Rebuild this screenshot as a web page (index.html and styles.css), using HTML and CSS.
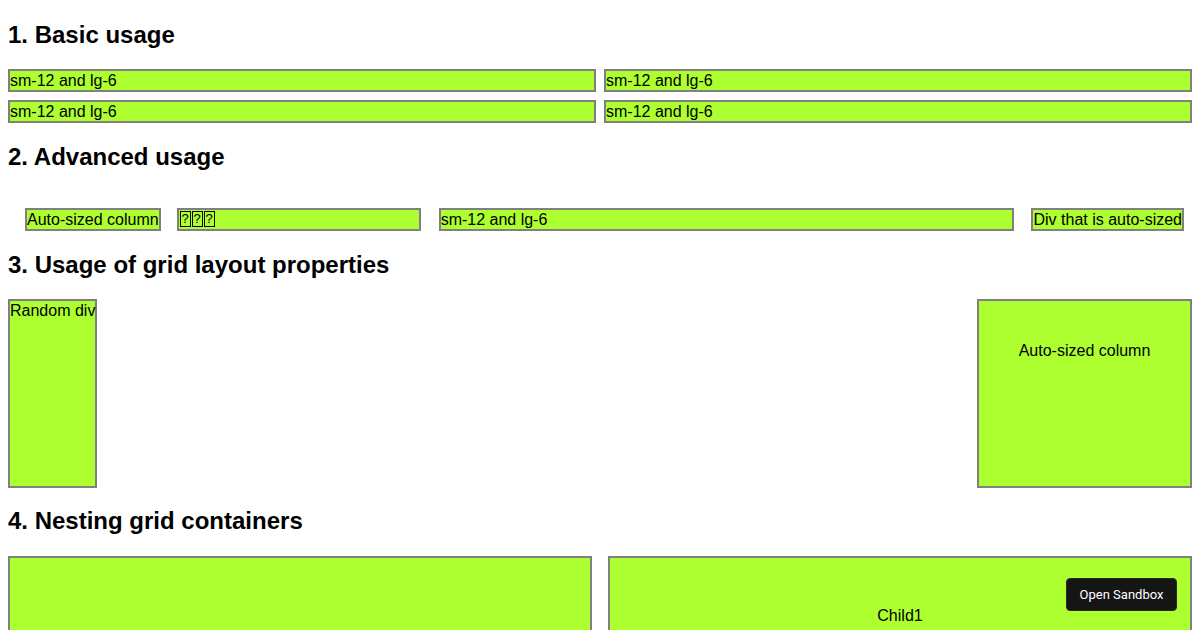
FILE: index.html
```html
<!DOCTYPE html>
<html>
<head>
<meta charset="utf-8">
<link rel="stylesheet" href="styles.css">
</head>
<body>
<h2>1. Basic usage</h2>
<div class="grid-basic">
  <div class="box">sm-12 and lg-6</div>
  <div class="box">sm-12 and lg-6</div>
  <div class="box">sm-12 and lg-6</div>
  <div class="box">sm-12 and lg-6</div>
</div>
<h2>2. Advanced usage</h2>
<div class="row-adv">
  <div class="box first">Auto-sized column</div>
  <div class="box fixed"><span class="tofu">?</span><span class="tofu">?</span><span class="tofu">?</span></div>
  <div class="box grow">sm-12 and lg-6</div>
  <div class="box last">Div that is auto-sized</div>
</div>
<h2>3. Usage of grid layout properties</h2>
<div class="row-props">
  <div class="box tall">Random div</div>
  <div class="box tall wide">Auto-sized column</div>
</div>
<h2>4. Nesting grid containers</h2>
<div class="row-nest">
  <div class="box nest"></div>
  <div class="box nest child">Child1</div>
</div>
<button class="sandbox">Open Sandbox</button>
</body>
</html>
```

FILE: styles.css
```css
html {
  overflow: hidden;
}
body {
  margin: 0 8px 8px;
  padding-top: 1px;
  font-family: "Liberation Sans", Arial, sans-serif;
  font-size: 16px;
  color: #000;
  background: #fff;
}
h2 {
  font-size: 24px;
  font-weight: bold;
  margin: 19.92px 0;
}
.box {
  background: #adff2f;
  border: 2px solid #808080;
  line-height: 19px;
}
.grid-basic {
  display: grid;
  grid-template-columns: 1fr 1fr;
  gap: 8px;
  margin-top: 20px;
}
.row-adv {
  display: flex;
  align-items: flex-start;
  padding: 17px 8px 0 17px;
}
.row-adv .box {
  margin-right: 17px;
  white-space: nowrap;
}
.row-adv .first {
  flex: none;
}
.row-adv .fixed {
  width: 240px;
  flex: none;
  margin-left: -1px;
  margin-right: 18px;
}
.row-adv .grow {
  flex: 1;
}
.row-adv .last {
  flex: none;
  margin-right: 0;
}
.tofu {
  display: inline-block;
  width: 9px;
  height: 14px;
  border: 1px solid #000;
  font-size: 13px;
  line-height: 14px;
  text-align: center;
  margin: 1px 0 0 1px;
  vertical-align: top;
}
.row-props {
  display: flex;
  justify-content: space-between;
}
.tall {
  height: 185px;
}
.wide {
  width: 211px;
  box-sizing: content-box;
  padding-top: 40px;
  height: 145px;
  text-align: center;
}
.row-nest {
  display: grid;
  grid-template-columns: 1fr 1fr;
  gap: 16px;
  margin-top: 21px;
}
.nest {
  height: 120px;
}
.child {
  text-align: center;
  padding-top: 48px;
  box-sizing: border-box;
}
.sandbox {
  position: fixed;
  right: 23px;
  bottom: 19px;
  width: 111px;
  height: 33px;
  background: #151515;
  color: #fff;
  border: 1px solid #2a2a2a;
  border-radius: 4px;
  font-family: Roboto, "Liberation Sans", sans-serif;
  font-size: 13px;
  padding: 0;
  cursor: pointer;
}
```
